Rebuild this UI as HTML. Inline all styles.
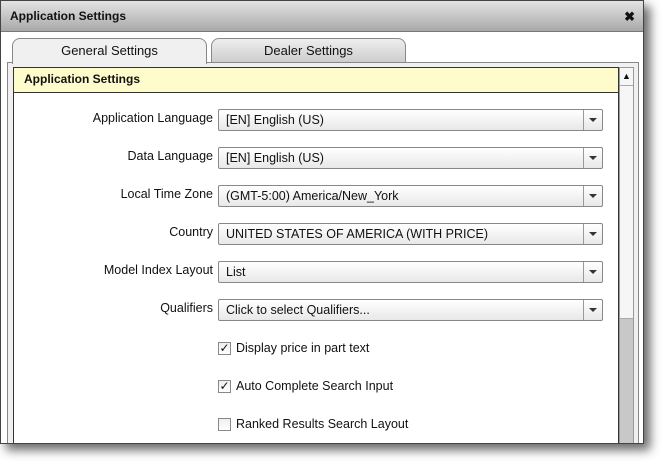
<!DOCTYPE html><html><head><style>
body{margin:0;width:668px;height:467px;background:#fff;position:relative;overflow:hidden;font-family:"Liberation Sans",Arial,sans-serif;font-size:12px;color:#111}
.win{position:absolute;left:0;top:0;width:644px;height:444px;border:1px solid #444;box-sizing:border-box;background:#fff;box-shadow:6px 6px 10px rgba(0,0,0,.6);overflow:hidden}
.title{position:absolute;left:0;top:0;right:0;height:31px;background:linear-gradient(#e4e4e4,#a8a8a8);border-bottom:1px solid #777;font-weight:bold;font-size:12px;line-height:31px;padding-left:9px;box-sizing:border-box}
.x{position:absolute;right:8px;top:0;font-size:13px;font-weight:bold}
.tab{position:absolute;top:37px;height:25px;border:1px solid #888;border-bottom:none;border-radius:8px 8px 0 0;box-sizing:border-box;text-align:center;line-height:24px;font-size:13px}
.t1{left:11px;width:195px;background:#f0f0f0;z-index:2;height:26px}
.t2{left:210px;width:195px;background:linear-gradient(#eee,#ccc)}
.panel{position:absolute;left:6px;top:61px;width:632px;height:400px;border:1px solid #888;background:#f0f0f0;box-sizing:border-box}
.inner{position:absolute;left:12px;top:66px;width:606px;height:400px;border:1px solid #333;background:#fff;box-sizing:border-box}
.hdr{position:absolute;left:0;top:0;right:0;height:24px;background:#fffccc;border-bottom:1px solid #333;font-weight:bold;line-height:23px;padding-left:10px;font-size:12px}
.sb{position:absolute;left:618px;top:66px;width:15px;height:400px;border:1px solid #999;box-sizing:border-box;background:#c8c8c8}
.sbt{position:absolute;left:0;top:0;right:0;height:250px;background:#f6f6f6;border-bottom:1px solid #aaa}
.up{position:absolute;left:0;top:0;right:0;height:17px;border-bottom:1px solid #aaa;text-align:center;font-size:9px;line-height:17px}
.lbl{position:absolute;right:430px;font-size:12.5px}
.sel{position:absolute;left:217px;width:385px;height:22px;border:1px solid #888;border-radius:2px;box-sizing:border-box;background:linear-gradient(#fff,#e8e8e8);line-height:20px;padding-left:7px;font-size:12.5px}
.sel:after{content:"";position:absolute;right:0;top:0;width:18px;height:20px;border-left:1px solid #999}
.sel i{position:absolute;right:5px;top:8px;width:0;height:0;border-left:4px solid transparent;border-right:4px solid transparent;border-top:4px solid #333}
.cb{position:absolute;left:217px;width:13px;height:13px;border:1px solid #888;box-sizing:border-box;background:linear-gradient(#eee,#fff);font-size:12px;line-height:11px;text-align:center}
.ct{position:absolute;left:235px;font-size:12.5px}
</style></head><body>
<div class="win">
<div class="title">Application Settings<span class="x">✖</span></div>
<div class="tab t1">General Settings</div>
<div class="tab t2">Dealer Settings</div>
<div class="panel"></div>
<div class="inner"><div class="hdr">Application Settings</div></div>
<div class="sb"><div class="sbt"><div class="up">▲</div></div></div>
<div class="lbl" style="top:110px">Application Language</div><div class="sel" style="top:108px">[EN] English (US)<i></i></div>
<div class="lbl" style="top:148px">Data Language</div><div class="sel" style="top:146px">[EN] English (US)<i></i></div>
<div class="lbl" style="top:186px">Local Time Zone</div><div class="sel" style="top:184px">(GMT-5:00) America/New_York<i></i></div>
<div class="lbl" style="top:224px">Country</div><div class="sel" style="top:222px">UNITED STATES OF AMERICA (WITH PRICE)<i></i></div>
<div class="lbl" style="top:262px">Model Index Layout</div><div class="sel" style="top:260px">List<i></i></div>
<div class="lbl" style="top:300px">Qualifiers</div><div class="sel" style="top:298px">Click to select Qualifiers...<i></i></div>
<div class="cb" style="top:341px">✓</div><div class="ct" style="top:340px">Display price in part text</div>
<div class="cb" style="top:379px">✓</div><div class="ct" style="top:378px">Auto Complete Search Input</div>
<div class="cb" style="top:417px"></div><div class="ct" style="top:416px">Ranked Results Search Layout</div>
</div>
</body></html>
